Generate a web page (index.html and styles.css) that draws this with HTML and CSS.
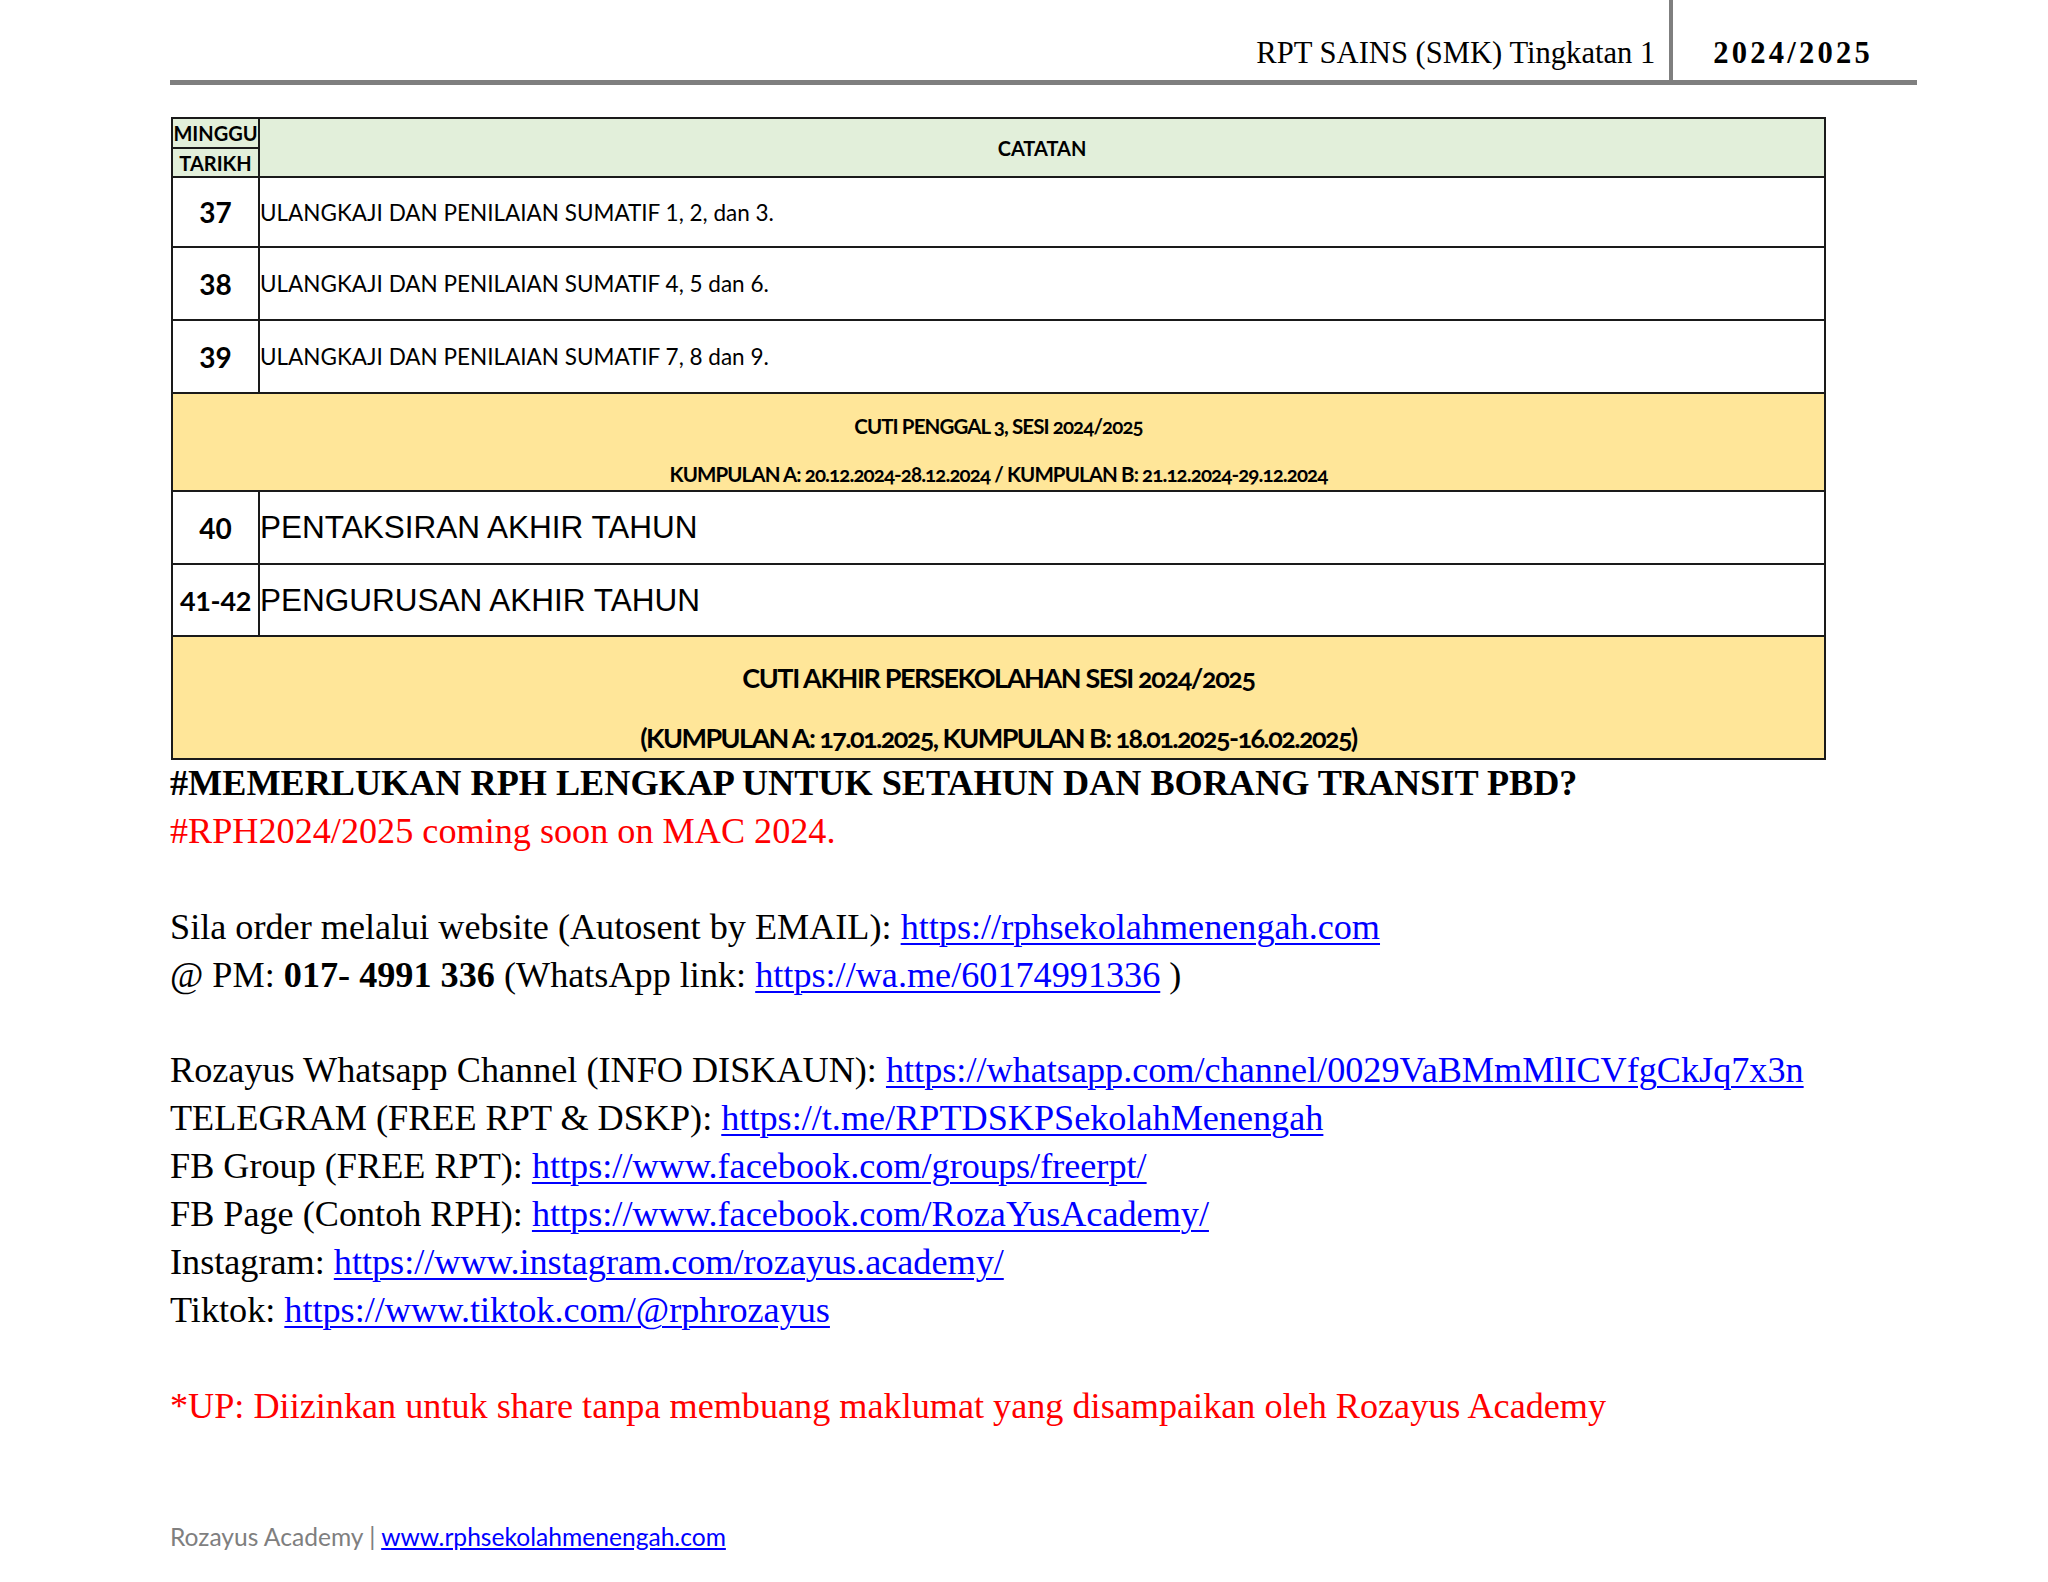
FILE: index.html
```html
<!DOCTYPE html>
<html lang="ms">
<head>
<meta charset="utf-8">
<title>RPT SAINS (SMK) Tingkatan 1 2024/2025</title>
<link rel="stylesheet" href="styles.css">
</head>
<body>
<div class="page">
  <header class="doc-header">
    <div class="doc-title">RPT SAINS (SMK) Tingkatan 1</div>
    <div class="doc-year">2024/2025</div>
  </header>

  <table class="rpt">
    <colgroup><col class="c-week"><col class="c-note"></colgroup>
    <tr class="r-head1">
      <th class="th-week">MINGGU</th>
      <th class="th-note" rowspan="2">CATATAN</th>
    </tr>
    <tr class="r-head2">
      <th class="th-week">TARIKH</th>
    </tr>
    <tr class="r-37">
      <td class="wk">37</td>
      <td class="txt">ULANGKAJI DAN PENILAIAN SUMATIF 1, 2, dan 3.</td>
    </tr>
    <tr class="r-38">
      <td class="wk">38</td>
      <td class="txt">ULANGKAJI DAN PENILAIAN SUMATIF 4, 5 dan 6.</td>
    </tr>
    <tr class="r-39">
      <td class="wk">39</td>
      <td class="txt">ULANGKAJI DAN PENILAIAN SUMATIF 7, 8 dan 9.</td>
    </tr>
    <tr class="r-hol1">
      <td class="hol hol-sm" colspan="2">
        <div class="hol-line1">CUTI PENGGAL 3, SESI 2024/2025</div>
        <div class="hol-line2">KUMPULAN A: 20.12.2024-28.12.2024 / KUMPULAN B: 21.12.2024-29.12.2024</div>
      </td>
    </tr>
    <tr class="r-40">
      <td class="wk">40</td>
      <td class="txt-lg">PENTAKSIRAN AKHIR TAHUN</td>
    </tr>
    <tr class="r-41">
      <td class="wk">41-42</td>
      <td class="txt-lg">PENGURUSAN AKHIR TAHUN</td>
    </tr>
    <tr class="r-hol2">
      <td class="hol hol-lg" colspan="2">
        <div class="hol-line1">CUTI AKHIR PERSEKOLAHAN SESI 2024/2025</div>
        <div class="hol-line2">(KUMPULAN A: 17.01.2025, KUMPULAN B: 18.01.2025-16.02.2025)</div>
      </td>
    </tr>
  </table>

  <div class="notes">
    <p class="strong">#MEMERLUKAN RPH LENGKAP UNTUK SETAHUN DAN BORANG TRANSIT PBD?</p>
    <p class="red">#RPH2024/2025 coming soon on MAC 2024.</p>
    <p class="blank">&nbsp;</p>
    <p>Sila order melalui website (Autosent by EMAIL): <a href="#">https://rphsekolahmenengah.com</a></p>
    <p>@ PM: <b>017- 4991 336</b> (WhatsApp link: <a href="#">https://wa.me/60174991336</a> )</p>
    <p class="blank">&nbsp;</p>
    <p>Rozayus Whatsapp Channel (INFO DISKAUN): <a href="#">https://whatsapp.com/channel/0029VaBMmMlICVfgCkJq7x3n</a></p>
    <p>TELEGRAM (FREE RPT &amp; DSKP): <a href="#">https://t.me/RPTDSKPSekolahMenengah</a></p>
    <p>FB Group (FREE RPT): <a href="#">https://www.facebook.com/groups/freerpt/</a></p>
    <p>FB Page (Contoh RPH): <a href="#">https://www.facebook.com/RozaYusAcademy/</a></p>
    <p>Instagram: <a href="#">https://www.instagram.com/rozayus.academy/</a></p>
    <p>Tiktok: <a href="#">https://www.tiktok.com/@rphrozayus</a></p>
    <p class="blank">&nbsp;</p>
    <p class="red">*UP: Diizinkan untuk share tanpa membuang maklumat yang disampaikan oleh Rozayus Academy</p>
  </div>

  <footer class="doc-footer">
    <span class="ft-name">Rozayus Academy</span> <span class="ft-sep">|</span> <a href="#">www.rphsekolahmenengah.com</a>
  </footer>
</div>
</body>
</html>
```

FILE: styles.css
```css
html, body {
  margin: 0;
  padding: 0;
  background: #ffffff;
}

.page {
  padding-left: 170px;
  width: 1747px;
}

/* ---------- header ---------- */
.doc-header {
  display: flex;
  justify-content: flex-end;
  height: 80px;
  border-bottom: 5px solid #7f7f7f;
  font-family: "Liberation Serif", "Times New Roman", serif;
  color: #000;
}

.doc-title {
  align-self: flex-end;
  font-size: 30.6px;
  line-height: 34px;
  padding: 0 14px 10px 0;
  white-space: nowrap;
}

.doc-year {
  border-left: 4px solid #7f7f7f;
  padding: 36px 44px 10px 40px;
  font-size: 30.6px;
  line-height: 34px;
  font-weight: bold;
  letter-spacing: 3.2px;
  white-space: nowrap;
}

/* ---------- table ---------- */
.rpt {
  margin-top: 32px;
  margin-left: 1px;
  width: 1655px;
  border-collapse: collapse;
  font-family: Lato, "Open Sans", sans-serif;
  color: #000;
}

.c-week { width: 87px; }

.rpt th,
.rpt td {
  border: 2px solid #1a1a1a;
  padding: 0;
}

.rpt th {
  background: #e2efda;
  font-weight: bold;
}

.th-week {
  font-size: 20px;
  line-height: 22px;
  text-align: center;
  white-space: nowrap;
}

.r-head1 { height: 30px; }
.r-head2 { height: 29px; }

.th-note {
  font-size: 20px;
  text-align: center;
}

.r-37 { height: 70px; }
.r-38 { height: 73px; }
.r-39 { height: 73px; }
.r-hol1 { height: 98px; }
.r-40 { height: 73px; }
.r-41 { height: 72px; }
.r-hol2 { height: 123px; }

.wk {
  font-weight: bold;
  font-size: 28px;
  text-align: center;
  white-space: nowrap;
  padding-top: 2px;
}

.r-41 .wk {
  font-size: 27px;
  letter-spacing: -0.3px;
}

.txt {
  font-size: 22.5px;
  padding-left: 1px;
  padding-top: 3px;
}

.txt-lg {
  font-family: "Liberation Sans", Arial, sans-serif;
  font-size: 31.5px;
  padding-left: 0;
}

.hol {
  background: #ffe699;
  text-align: center;
  vertical-align: bottom;
  font-weight: bold;
  font-variant-numeric: oldstyle-nums;
  padding: 0;
}

.hol-sm {
  font-size: 20.5px;
  letter-spacing: -0.9px;
}

.hol-sm .hol-line1 { line-height: 64px; }
.hol-sm .hol-line2 { line-height: 32px; }

.hol-lg {
  font-size: 27px;
  letter-spacing: -1.4px;
}

.hol-lg .hol-line1 { line-height: 80px; }
.hol-lg .hol-line2 { line-height: 40px; letter-spacing: -1.6px; }

/* ---------- notes ---------- */
.notes {
  font-family: "Liberation Serif", "Times New Roman", serif;
  font-size: 36.2px;
  line-height: 47.9px;
  color: #000;
  white-space: nowrap;
}

.notes p {
  margin: 0;
}

.notes .strong {
  font-weight: bold;
}

.notes .red {
  color: #ff0000;
}

.notes a {
  color: #0000ff;
  text-decoration: underline;
  text-decoration-thickness: 2px;
  text-underline-offset: 4px;
}

/* ---------- footer ---------- */
.doc-footer {
  margin-top: 91px;
  font-family: Lato, "Open Sans", sans-serif;
  font-size: 24.6px;
  line-height: 30px;
  color: #7f7f7f;
  white-space: nowrap;
}

.doc-footer a {
  color: #0000ff;
  text-decoration: underline;
}
```
